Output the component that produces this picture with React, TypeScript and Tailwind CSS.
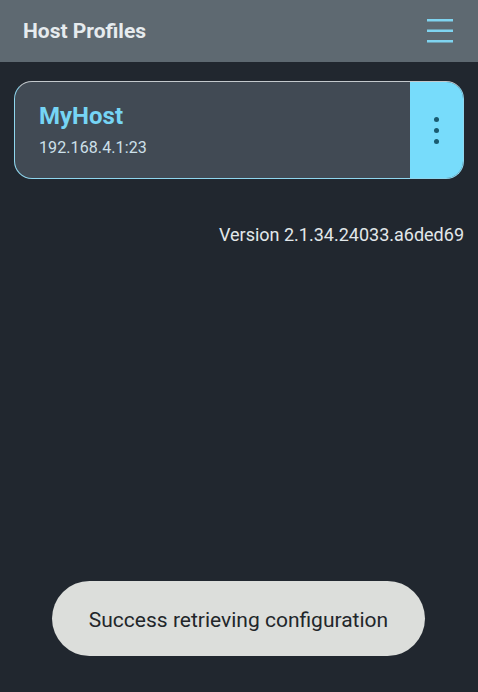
import React from 'react'

export default function App() {
  return (
    <div
      className="relative w-[478px] h-[692px] bg-[#21272f] overflow-hidden flex flex-col"
      style={{ fontFamily: 'Roboto, "Noto Sans", sans-serif' }}
    >
      {/* Header */}
      <div className="h-[62px] bg-[#5e6971] flex items-center justify-between pl-[23px] pr-[25px] shrink-0">
        <span className="text-[21px] font-bold text-[#e6ebee] leading-[26px] tracking-[0px]">Host Profiles</span>
        <svg width="26" height="26" viewBox="0 0 26 26">
          <rect x="0" y="1" width="26" height="2.5" fill="#7fd4f0" />
          <rect x="0" y="11.5" width="26" height="2.5" fill="#7fd4f0" />
          <rect x="0" y="22" width="26" height="2.5" fill="#7fd4f0" />
        </svg>
      </div>

      {/* Host card */}
      <div className="mt-[19px] mx-[14px] h-[98px] rounded-[18px] border border-[#8fd6ee] border-t-[#c3c9cd] bg-[#414a54] flex overflow-hidden">
        <div className="flex-1 flex flex-col justify-center pl-[24px]">
          <span className="text-[24px] font-bold text-[#76d5f5] leading-[28px]">MyHost</span>
          <span className="text-[16px] text-[#cde0ea] leading-[22px] mt-[7px] tracking-[0.1px]">192.168.4.1:23</span>
        </div>
        <div className="w-[53px] bg-[#77dcfb] flex flex-col items-center justify-center gap-[6px]">
          <span className="w-[5px] h-[5px] rounded-full bg-[#1a5b70]" />
          <span className="w-[5px] h-[5px] rounded-full bg-[#1a5b70]" />
          <span className="w-[5px] h-[5px] rounded-full bg-[#1a5b70]" />
        </div>
      </div>

      {/* Version */}
      <div className="mt-[44px] pr-[14px] text-right text-[18px] text-[#e2e7ea] leading-[24px]">
        Version 2.1.34.24033.a6ded69
      </div>

      {/* Toast */}
      <div className="absolute left-[52px] top-[581px] w-[373px] h-[75px] rounded-full bg-[#dcdedb] flex items-center justify-center pt-[4px]">
        <span className="text-[21px] text-[#22262a]">Success retrieving configuration</span>
      </div>
    </div>
  )
}
